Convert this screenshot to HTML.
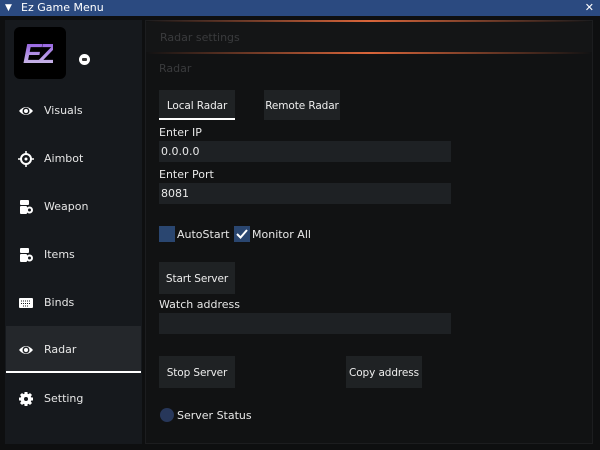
<!DOCTYPE html>
<html><head><meta charset="utf-8"><style>
*{margin:0;padding:0;box-sizing:border-box}
body{width:600px;height:450px;background:#0e0f10;font-family:"DejaVu Sans","Liberation Sans",sans-serif;font-size:11px;color:#e8e8e8;position:relative;overflow:hidden}
.a{position:absolute;white-space:nowrap}
.title{left:0;top:0;width:600px;height:16px;background:#2b4a80;color:#fff;font-size:11px;line-height:16px}
.side{left:5px;top:20px;width:137px;height:424px;background:#16191d}
.item{left:6px;width:135px;height:46px;line-height:48px;padding-left:38px;font-size:11px;color:#e6e6e6}
.ic{position:absolute;left:12px;top:16px;width:16px;height:16px}
.main{left:145px;top:20px;width:448px;height:424px;background:#111213;border:1px solid #1c1d1f}
.hdr{left:146px;top:22px;width:446px;height:30px;background:#141516;color:#3a3b3d;padding-left:14px;line-height:31px}
.oline{height:2px;background:linear-gradient(90deg,rgba(200,80,30,0),#d9653a 50%,rgba(200,80,30,0))}
.btn{background:#1f2224;color:#eee;text-align:center;font-size:10.5px;letter-spacing:-0.1px}
.inp{left:159px;width:292px;height:21px;background:#1e2124;padding-left:2px;line-height:22px}
.lbl{left:159px}
.cb{width:16px;height:16px;background:#2a4670}
</style></head><body>
<div class="a title"><span style="position:absolute;left:5px;font-size:9px">▼</span><span style="position:absolute;left:21px">Ez Game Menu</span><span style="position:absolute;right:6px;font-size:11px">✕</span></div>
<div class="a side"></div>
<div class="a" style="left:14px;top:27px;width:52px;height:52px;background:#000;border-radius:6px;overflow:hidden">
<div style="position:absolute;left:9px;top:11px;font:bold italic 28px 'Liberation Sans',sans-serif;letter-spacing:-3px;background:linear-gradient(180deg,#8a4fe0,#d8d0e8);-webkit-background-clip:text;color:transparent">EZ</div></div>
<div class="a" style="left:79px;top:54px;width:11px;height:11px;border-radius:50%;background:#fff"><div style="position:absolute;left:3px;top:4px;width:5px;height:3px;background:#333;border-radius:1px"></div></div>

<div class="a item" style="top:87px"><svg class="ic" viewBox="0 0 16 16"><path d="M1 8Q8 0 15 8Q8 16 1 8Z" fill="#fff"/><circle cx="8" cy="8" r="3.5" fill="#16191d"/><circle cx="8" cy="8" r="2" fill="#fff"/></svg>Visuals</div>
<div class="a item" style="top:135px"><svg class="ic" viewBox="0 0 16 16"><circle cx="8" cy="8" r="5" fill="none" stroke="#fff" stroke-width="2"/><circle cx="8" cy="8" r="1.5" fill="#fff"/><path d="M8 0v3M8 13v3M0 8h3M13 8h3" stroke="#fff" stroke-width="1.5"/></svg>Aimbot</div>
<div class="a item" style="top:183px"><svg class="ic" viewBox="0 0 16 16"><rect x="2" y="1" width="9" height="5" rx="1" fill="#fff"/><rect x="2" y="7" width="7" height="8" rx="1" fill="#fff"/><circle cx="11.5" cy="11" r="3.5" fill="#fff"/><circle cx="11.5" cy="11" r="1.5" fill="#16191d"/></svg>Weapon</div>
<div class="a item" style="top:231px"><svg class="ic" viewBox="0 0 16 16"><rect x="2" y="1" width="9" height="5" rx="1" fill="#fff"/><rect x="2" y="7" width="7" height="8" rx="1" fill="#fff"/><circle cx="11.5" cy="11" r="3.5" fill="#fff"/><circle cx="11.5" cy="11" r="1.5" fill="#16191d"/></svg>Items</div>
<div class="a item" style="top:279px"><svg class="ic" viewBox="0 0 16 16"><rect x="1" y="3" width="14" height="10" rx="1" fill="#fff"/><path d="M3 6h10M3 8.5h10M5 11h6" stroke="#16191d" stroke-width="1" stroke-dasharray="1 1"/></svg>Binds</div>
<div class="a item" style="top:326px;background:#24272b"><svg class="ic" viewBox="0 0 16 16"><path d="M1 8Q8 0 15 8Q8 16 1 8Z" fill="#fff"/><circle cx="8" cy="8" r="3.5" fill="#24272b"/><circle cx="8" cy="8" r="2" fill="#fff"/></svg>Radar</div>
<div class="a" style="left:6px;top:371px;width:135px;height:2px;background:#fff"></div>
<div class="a item" style="top:375px"><svg class="ic" viewBox="0 0 16 16"><circle cx="8" cy="8" r="5.5" fill="#fff"/><path d="M8 1v14M1 8h14M3 3l10 10M13 3L3 13" stroke="#fff" stroke-width="3"/><circle cx="8" cy="8" r="2" fill="#16191d"/></svg>Setting</div>

<div class="a main"></div>
<div class="a hdr">Radar settings</div>
<div class="a oline" style="left:146px;top:20px;width:446px"></div>
<div class="a oline" style="left:146px;top:52px;width:446px"></div>
<div class="a" style="left:159px;top:62px;color:#3a3b3d">Radar</div>

<div class="a btn" style="left:159px;top:90px;width:76px;height:30px;line-height:33px">Local Radar</div>
<div class="a" style="left:159px;top:118px;width:76px;height:2px;background:#fff"></div>
<div class="a btn" style="left:264px;top:90px;width:76px;height:30px;line-height:33px">Remote Radar</div>

<div class="a lbl" style="top:126px">Enter IP</div>
<div class="a inp" style="top:141px">0.0.0.0</div>
<div class="a lbl" style="top:168px">Enter Port</div>
<div class="a inp" style="top:183px">8081</div>

<div class="a cb" style="left:159px;top:226px"></div>
<div class="a" style="left:177px;top:228px">AutoStart</div>
<div class="a cb" style="left:234px;top:226px"><svg width="16" height="16" viewBox="0 0 16 16"><path d="M3 8l3.5 3.5L13 4" stroke="#fff" stroke-width="2" fill="none"/></svg></div>
<div class="a" style="left:252px;top:228px">Monitor All</div>

<div class="a btn" style="left:159px;top:262px;width:76px;height:32px;line-height:35px">Start Server</div>
<div class="a lbl" style="top:298px">Watch address</div>
<div class="a inp" style="top:313px"></div>
<div class="a btn" style="left:159px;top:356px;width:76px;height:32px;line-height:35px">Stop Server</div>
<div class="a btn" style="left:346px;top:356px;width:76px;height:32px;line-height:35px">Copy address</div>
<div class="a" style="left:160px;top:408px;width:14px;height:14px;border-radius:50%;background:#27375a"></div>
<div class="a" style="left:177px;top:409px">Server Status</div>
</body></html>
